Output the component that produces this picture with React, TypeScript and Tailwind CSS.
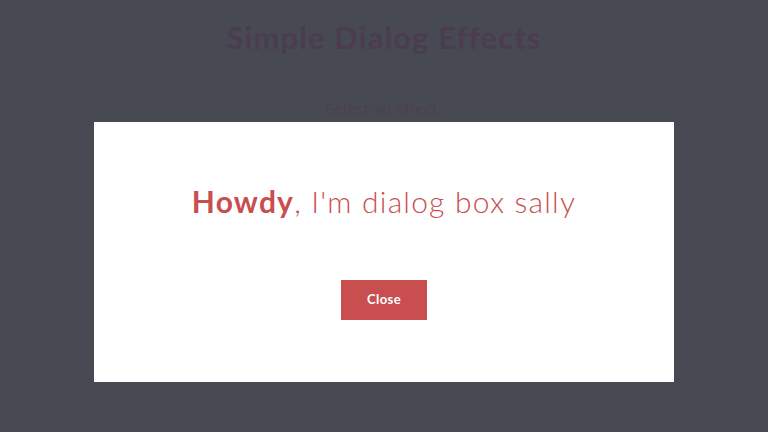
export default function App() {
  return (
    <div className="relative h-[432px] w-[768px] overflow-hidden bg-[#474a53] font-['Lato',sans-serif]">
      {/* page behind the overlay */}
      <header className="pt-[18px] text-center">
        <h1 className="text-[31px] font-bold leading-[38px] tracking-[1.1px] text-[#4b3c4e]">Simple Dialog Effects</h1>
        <p className="mt-[42px] text-[16px] leading-[20px] tracking-[0.2px] text-[#4d3f50]">Select an effect:</p>
      </header>

      {/* dialog */}
      <div className="absolute left-[94px] top-[122px] flex h-[260px] w-[580px] flex-col items-center bg-white">
        <h2 className="mt-[59px] text-[30px] font-light leading-[40px] tracking-[1.2px] text-[#c94e50]">
          <strong className="font-bold">Howdy</strong>, I'm dialog box sally
        </h2>
        <button
          type="button"
          className="mt-[59px] h-[40px] w-[86px] bg-[#c94e50] text-[13px] font-bold tracking-[0.4px] text-white"
        >
          Close
        </button>
      </div>
    </div>
  );
}
